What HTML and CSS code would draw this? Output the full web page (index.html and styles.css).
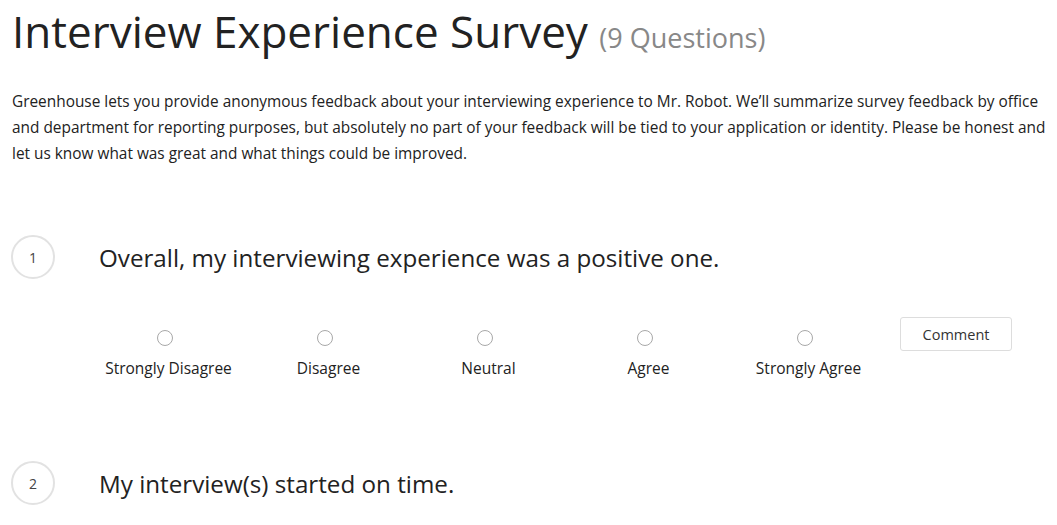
FILE: index.html
```html
<!DOCTYPE html>
<html>
<head>
<meta charset="utf-8">
<link rel="stylesheet" href="styles.css">
</head>
<body>
<div class="page">
  <h1 class="title">Interview Experience Survey <span class="count">(9 Questions)</span></h1>
  <p class="intro">Greenhouse lets you provide anonymous feedback about your interviewing experience to Mr. Robot. We’ll summarize survey feedback by office and department for reporting purposes, but absolutely no part of your feedback will be tied to your application or identity. Please be honest and let us know what was great and what things could be improved.</p>

  <div class="question">
    <div class="q-head">
      <div class="q-num">1</div>
      <div class="q-text">Overall, my interviewing experience was a positive one.</div>
    </div>
    <div class="q-body">
      <div class="options">
        <label class="option"><span class="radio"></span><span class="opt-label">Strongly Disagree</span></label>
        <label class="option"><span class="radio"></span><span class="opt-label">Disagree</span></label>
        <label class="option"><span class="radio"></span><span class="opt-label">Neutral</span></label>
        <label class="option"><span class="radio"></span><span class="opt-label">Agree</span></label>
        <label class="option"><span class="radio"></span><span class="opt-label">Strongly Agree</span></label>
      </div>
      <button class="comment">Comment</button>
    </div>
  </div>

  <div class="question question-2">
    <div class="q-head">
      <div class="q-num">2</div>
      <div class="q-text">My interview(s) started on time.</div>
    </div>
  </div>
</div>
</body>
</html>
```
FILE: styles.css
```css
html, body {
  margin: 0;
  padding: 0;
  background: #fff;
}
body {
  font-family: "Open Sans", "Liberation Sans", sans-serif;
  color: #222;
}
.page {
  padding: 0 4px 0 12px;
}
.title {
  margin: 0;
  padding-top: 3px;
  font-size: 44px;
  font-weight: 400;
  line-height: 56px;
  color: #222;
}
.count {
  font-size: 27px;
  color: #888;
}
.intro {
  margin: 23px 0 0;
  font-size: 15.4px;
  line-height: 26px;
  color: #222;
}
.question {
  margin-top: 68px;
}
.question-2 {
  margin-top: 82px;
}
.q-head {
  display: flex;
  align-items: center;
}
.q-num {
  width: 40px;
  height: 40px;
  border: 2px solid #e2e2e2;
  border-radius: 50%;
  display: flex;
  align-items: center;
  justify-content: center;
  font-size: 14px;
  color: #444;
  margin-left: -1px;
}
.q-text {
  margin-left: 44px;
  font-size: 24.2px;
  color: #222;
}
.q-body {
  display: flex;
  align-items: flex-start;
  margin-top: 37px;
  padding-left: 73px;
}
.options {
  display: flex;
}
.option {
  width: 160px;
  display: flex;
  flex-direction: column;
  align-items: center;
}
.radio {
  width: 14px;
  height: 14px;
  border: 1px solid #a8a8a8;
  border-radius: 50%;
  margin-top: 14px;
}
.opt-label {
  margin-top: 11px;
  padding-left: 7px;
  font-size: 15.5px;
  color: #222;
}
.comment {
  margin-left: 15px;
  margin-top: 1px;
  width: 112px;
  height: 34px;
  border: 1px solid #ddd;
  border-radius: 3px;
  background: #fff;
  font-family: "Open Sans", "Liberation Sans", sans-serif;
  font-size: 14.5px;
  color: #333;
}
```
